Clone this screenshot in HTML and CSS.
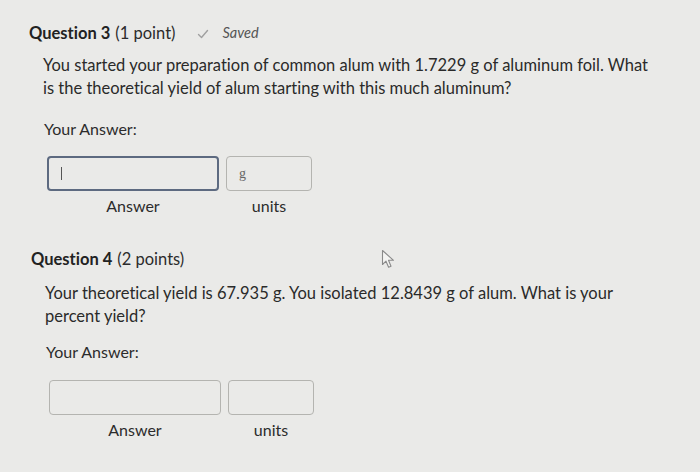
FILE: index.html
```html
<!DOCTYPE html>
<html>
<head>
<meta charset="utf-8">
<link rel="stylesheet" href="styles.css">
</head>
<body>
<main class="page">
  <section class="question q3">
    <div class="q-head">
      <span class="q-title">Question 3</span>
      <span class="q-points">(1 point)</span>
      <span class="saved">
        <svg class="check" width="12" height="10" viewBox="0 0 12 10"><path d="M1.5 5.5 L4.5 8.5 L10.5 1.5" fill="none" stroke="#a0a0a0" stroke-width="1.4" stroke-linecap="round" stroke-linejoin="round"/></svg>
        <em>Saved</em>
      </span>
    </div>
    <p class="q-text">You started your preparation of common alum with 1.7229 g of aluminum foil. What is the theoretical yield of alum starting with this much aluminum?</p>
    <div class="your-answer">Your Answer:</div>
    <div class="answer-row">
      <div class="field field-answer">
        <div class="box focused"><span class="caret"></span></div>
        <div class="label">Answer</div>
      </div>
      <div class="field field-units">
        <div class="box units-box"><span class="unit-val">g</span></div>
        <div class="label">units</div>
      </div>
    </div>
  </section>

  <section class="question q4">
    <div class="q-head">
      <span class="q-title">Question 4</span>
      <span class="q-points">(2 points)</span>
    </div>
    <p class="q-text">Your theoretical yield is 67.935 g. You isolated 12.8439 g of alum. What is your percent yield?</p>
    <div class="your-answer">Your Answer:</div>
    <div class="answer-row">
      <div class="field field-answer">
        <div class="box"></div>
        <div class="label">Answer</div>
      </div>
      <div class="field field-units">
        <div class="box units-box"></div>
        <div class="label">units</div>
      </div>
    </div>
    <svg class="cursor" width="16" height="21" viewBox="0 0 16 21"><path d="M1.5 1.5 L1.5 15.5 L5 12.2 L7.6 18.2 L10 17.2 L7.5 11.3 L12.5 11.3 Z" fill="#f4f4f2" stroke="#8a8a8a" stroke-width="1.1" stroke-linejoin="round"/></svg>
  </section>
</main>
</body>
</html>
```

FILE: styles.css
```css
html, body {
  margin: 0;
  padding: 0;
}
body {
  background: #eaeae8;
  font-family: Lato, "Open Sans", sans-serif;
  font-variant-ligatures: none;
  color: #2c2c2c;
  width: 700px;
  height: 472px;
  overflow: hidden;
}
.page {
  padding: 22px 0 0 29px;
}
.question {
  position: relative;
}
.q4 {
  margin-top: 32px;
  padding-left: 2px;
}
.q-head {
  font-size: 16.5px;
  line-height: 22px;
  display: flex;
  align-items: center;
}
.q-title {
  font-weight: 700;
  color: #222;
}
.q-points {
  margin-left: 5px;
  color: #2c2c2c;
}
.saved {
  margin-left: 22px;
  display: flex;
  align-items: center;
  gap: 13px;
  font-size: 14.5px;
  color: #555;
}
.saved em {
  font-style: italic;
}
.check {
  margin-top: 2px;
}
.q-text {
  margin: 10px 0 0 14px;
  font-size: 16.5px;
  line-height: 23px;
  width: 610px;
  color: #2a2a2a;
}
.q4 .q-text {
  margin-top: 12px;
}
.your-answer {
  margin: 18px 0 0 15px;
  font-size: 16px;
  line-height: 22px;
}
.q4 .your-answer {
  margin-top: 13px;
}
.answer-row {
  margin: 16px 0 0 18px;
  display: flex;
  gap: 7px;
}
.q4 .answer-row {
  margin-top: 17px;
}
.field {
  display: flex;
  flex-direction: column;
  align-items: center;
}
.box {
  height: 35px;
  box-sizing: border-box;
  border: 1.5px solid #b4b4b0;
  border-radius: 4px;
  display: flex;
  align-items: center;
}
.field-answer .box {
  width: 172px;
}
.units-box {
  width: 86px;
}
.box.focused {
  border: 2px solid #5d6a80;
  padding-left: 12px;
}
.caret {
  width: 1.3px;
  height: 13px;
  background: #555;
}
.unit-val {
  margin-left: 12px;
  font-size: 14px;
  color: #666;
  font-family: "Liberation Serif", serif;
}
.label {
  margin-top: 5px;
  font-size: 16px;
  line-height: 20px;
  color: #2c2c2c;
}
.cursor {
  position: absolute;
  left: 352px;
  top: 1px;
}
```
